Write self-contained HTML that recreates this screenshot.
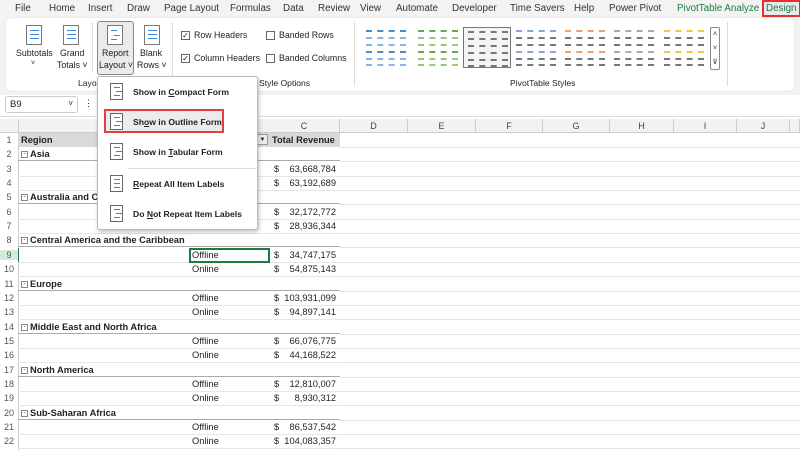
<!DOCTYPE html>
<html><head><meta charset="utf-8"><style>
*{margin:0;padding:0;box-sizing:border-box}
body{width:800px;height:450px;overflow:hidden;background:#fff;font-family:"Liberation Sans",sans-serif;font-size:9.3px;color:#222;position:relative}
.a{position:absolute;white-space:nowrap}
.menu span{position:absolute;top:3px;font-size:9.8px;color:#333}
.ib{position:absolute;width:16px;height:20px;border:1px solid #777;background:#fff}
.ib i{position:absolute;left:3px;height:1px;width:9px;background:#3a8ad8}
.cb{position:absolute;width:9px;height:9px;border:1px solid #666;background:#fff;font-size:8px;line-height:7px;text-align:center}
.rn{position:absolute;left:0;width:18px;text-align:center;color:#555;font-size:9px}
.sty{position:absolute;top:27px;width:48px;height:41px}
.sty b{position:absolute;left:4px;width:40px;height:0;border-top:2px dashed #777}
.mi{position:absolute;left:104px;font-size:8.6px;font-weight:bold;color:#222}
.mic{position:absolute;left:110px;width:13px;height:17px;border:1px solid #666;background:#fff}
.mic i{position:absolute;left:3px;height:1px;width:6px;background:#3a8ad8}
.rb{font-size:8.8px}
</style></head><body>
<div class="a" style="left:0;top:0;width:800px;height:95px;background:#f3f3f3"></div>
<div class="menu">
<span style="left:15px">File</span><span style="left:49px">Home</span><span style="left:88px">Insert</span><span style="left:127px">Draw</span><span style="left:164px">Page Layout</span><span style="left:230px">Formulas</span><span style="left:283px">Data</span><span style="left:318px">Review</span><span style="left:360px">View</span><span style="left:396px">Automate</span><span style="left:452px">Developer</span><span style="left:510px">Time Savers</span><span style="left:574px">Help</span><span style="left:609px">Power Pivot</span><span style="left:677px;color:#1e7a44">PivotTable Analyze</span>
<span style="left:762px;top:0;color:#1e7a44;border:2px solid #e03030;padding:1px 2px;background:#e8e8e8">Design</span>
</div>
<div class="a" style="left:6px;top:18px;width:788px;height:73px;background:#fff;border-radius:6px;box-shadow:0 0 1px #bbb"></div>
<div class="rb">
<div class="ib" style="left:26px;top:25px"><i style="top:4px"></i><i style="top:8px"></i><i style="top:12px"></i></div>
<div class="a" style="left:16px;top:48px">Subtotals</div><div class="a" style="left:31px;top:60px;font-size:7px">˅</div>
<div class="ib" style="left:63px;top:25px"><i style="top:4px"></i><i style="top:8px"></i><i style="top:12px"></i></div>
<div class="a" style="left:60px;top:48px">Grand</div><div class="a" style="left:57px;top:60px">Totals ˅</div>
<div class="a" style="left:92px;top:22px;width:1px;height:50px;background:#ddd"></div>
<div class="a" style="left:97px;top:21px;width:37px;height:54px;border:1px solid #888;border-radius:3px;background:#eaeaea"></div>
<div class="ib" style="left:107px;top:25px"><i style="top:4px;width:6px"></i><i style="top:9px;width:6px;left:6px"></i><i style="top:13px;width:6px"></i></div>
<div class="a" style="left:102px;top:48px">Report</div><div class="a" style="left:99px;top:60px">Layout ˅</div>
<div class="ib" style="left:144px;top:25px"><i style="top:4px"></i><i style="top:8px"></i><i style="top:12px"></i></div>
<div class="a" style="left:140px;top:48px">Blank</div><div class="a" style="left:137px;top:60px">Rows ˅</div>
<div class="a" style="left:78px;top:78px;font-size:8.6px">Layo</div>
<div class="a" style="left:172px;top:22px;width:1px;height:64px;background:#ddd"></div>
<div class="cb" style="left:181px;top:31px">✓</div><div class="a" style="left:194px;top:30px">Row Headers</div>
<div class="cb" style="left:181px;top:54px">✓</div><div class="a" style="left:194px;top:53px">Column Headers</div>
<div class="cb" style="left:266px;top:31px"></div><div class="a" style="left:279px;top:30px">Banded Rows</div>
<div class="cb" style="left:266px;top:54px"></div><div class="a" style="left:279px;top:53px">Banded Columns</div>
<div class="a" style="left:259px;top:78px;font-size:8.6px">Style Options</div>
</div>
<div class="a" style="left:354px;top:22px;width:1px;height:64px;background:#ddd"></div>
<div class="sty" style="left:362px"><b style="top:3px;border-color:#4a8ad0"></b><b style="top:10px;border-color:#8ab6e6"></b><b style="top:17px;border-color:#8ab6e6"></b><b style="top:24px;border-color:#4a8ad0"></b><b style="top:31px;border-color:#8ab6e6"></b><b style="top:37px;border-color:#8ab6e6"></b></div>
<div class="sty" style="left:414px"><b style="top:3px;border-color:#6aa84f"></b><b style="top:10px;border-color:#9cc77f"></b><b style="top:17px;border-color:#9cc77f"></b><b style="top:24px;border-color:#6aa84f"></b><b style="top:31px;border-color:#9cc77f"></b><b style="top:37px;border-color:#9cc77f"></b></div>
<div class="sty" style="left:463px;border:1px solid #777;background:#f4f4f4"><b style="top:3px"></b><b style="top:10px"></b><b style="top:17px"></b><b style="top:24px"></b><b style="top:31px"></b><b style="top:37px"></b></div>
<div class="sty" style="left:512px"><b style="top:3px;border-color:#8aa4d6"></b><b style="top:10px"></b><b style="top:17px"></b><b style="top:24px;border-color:#8aa4d6"></b><b style="top:31px"></b><b style="top:37px"></b></div>
<div class="sty" style="left:561px"><b style="top:3px;border-color:#f0a070"></b><b style="top:10px"></b><b style="top:17px"></b><b style="top:24px;border-color:#f0a070"></b><b style="top:31px"></b><b style="top:37px"></b></div>
<div class="sty" style="left:610px"><b style="top:3px;border-color:#aaa"></b><b style="top:10px"></b><b style="top:17px"></b><b style="top:24px;border-color:#aaa"></b><b style="top:31px"></b><b style="top:37px"></b></div>
<div class="sty" style="left:660px"><b style="top:3px;border-color:#f0c840"></b><b style="top:10px"></b><b style="top:17px"></b><b style="top:24px;border-color:#f0c840"></b><b style="top:31px"></b><b style="top:37px"></b></div>
<div class="a" style="left:710px;top:27px;width:10px;height:43px;border:1px solid #888;border-radius:2px;font-size:7px;text-align:center;line-height:14px">˄<br>˅<br>⊽</div>
<div class="a" style="left:510px;top:78px;font-size:8.6px">PivotTable Styles</div>
<div class="a" style="left:727px;top:22px;width:1px;height:64px;background:#ddd"></div>
<div class="a" style="left:5px;top:96px;width:73px;height:17px;border:1px solid #ccc;border-radius:3px;padding:2px 4px;font-size:9.5px">B9<span style="position:absolute;right:4px;top:2px;font-size:8px">˅</span></div>
<div class="a" style="left:84px;top:98px;font-size:9px">⋮</div>
<div class="a" style="left:0;top:116px;width:800px;height:1px;background:#ddd"></div>
<div class="a" style="left:0;top:119px;width:800px;height:14px;background:#f2f2f2;border-bottom:1px solid #ccc"></div>
<div class="a" style="left:18px;top:119px;width:1px;height:331px;background:#ccc"></div>
<div id="cols"></div>
<div id="g"></div>
<div class="a" style="left:97px;top:76px;width:161px;height:154px;background:#fff;border:1px solid #bbb;border-radius:3px;box-shadow:1px 2px 4px rgba(0,0,0,.25)"></div>
<div class="mic" style="top:83px"><i style="top:3px"></i><i style="top:7px;left:5px"></i><i style="top:11px"></i></div><div class="mi" style="top:87px;left:133px">Show in <u>C</u>ompact Form</div>
<div class="a" style="left:104px;top:109px;width:120px;height:24px;border:2px solid #e04040;background:#ececec"></div>
<div class="mic" style="top:113px"><i style="top:3px"></i><i style="top:7px;left:5px"></i><i style="top:11px"></i></div><div class="mi" style="top:117px;left:133px">Sh<u>o</u>w in Outline Form</div>
<div class="mic" style="top:143px"><i style="top:3px"></i><i style="top:7px;left:5px"></i><i style="top:11px"></i></div><div class="mi" style="top:147px;left:133px">Show in <u>T</u>abular Form</div>
<div class="a" style="left:128px;top:168px;width:128px;height:1px;background:#ddd"></div>
<div class="mic" style="top:175px"><i style="top:3px"></i><i style="top:7px"></i><i style="top:11px"></i></div><div class="mi" style="top:179px;left:133px"><u>R</u>epeat All Item Labels</div>
<div class="mic" style="top:205px"><i style="top:3px"></i><i style="top:7px;left:5px"></i><i style="top:11px"></i></div><div class="mi" style="top:209px;left:133px">Do <u>N</u>ot Repeat Item Labels</div>
<script>
var cols=[["",18,0],["C",269,340],["D",340,408],["E",408,476],["F",476,543],["G",543,610],["H",610,674],["I",674,737],["J",737,790],["",790,800]];
var h="";
cols.forEach(function(c){if(c[2])h+='<div class="a" style="left:'+c[1]+'px;top:119px;width:'+(c[2]-c[1])+'px;height:14px;border-right:1px solid #ccc;text-align:center;line-height:14px;color:#444;font-size:9px">'+c[0]+'</div>';});
document.getElementById("cols").innerHTML=h;
var rows=[["Region","","",""],["Asia","","",""],["","","$","63,668,784"],["","","$","63,192,689"],["Australia and Oceania","","",""],["","","$","32,172,772"],["","","$","28,936,344"],["Central America and the Caribbean","","",""],["","Offline","$","34,747,175"],["","Online","$","54,875,143"],["Europe","","",""],["","Offline","$","103,931,099"],["","Online","$","94,897,141"],["Middle East and North Africa","","",""],["","Offline","$","66,076,775"],["","Online","$","44,168,522"],["North America","","",""],["","Offline","$","12,810,007"],["","Online","$","8,930,312"],["Sub-Saharan Africa","","",""],["","Offline","$","86,537,542"],["","Online","$","104,083,357"]];
var g="";
rows.forEach(function(r,i){var t=133+i*14.35;
g+='<div class="rn" style="top:'+(t+2)+'px;'+(i==8?'color:#1e7a44;background:#d8e8dd;':'')+'">'+(i+1)+'</div>';
g+='<div class="a" style="left:340px;top:'+(t+14)+'px;width:460px;height:1px;background:#e3e3e3"></div>';
if(i==0){g+='<div class="a" style="left:18px;top:'+t+'px;width:322px;height:14px;background:#d9d9d9"></div><div class="a" style="left:21px;top:'+(t+2)+'px;font-weight:bold">Region</div><div class="a" style="left:257px;top:'+(t+1)+'px;width:11px;height:11px;border:1px solid #999;background:#eee;font-size:6px;text-align:center;line-height:10px">▼</div><div class="a" style="left:272px;top:'+(t+2)+'px;font-weight:bold">Total Revenue</div>';}
else if(r[0]){g+='<div class="a" style="left:21px;top:'+(t+4)+'px;width:7px;height:7px;border:1px solid #888;font-size:6px;line-height:4px;text-align:center">-</div><div class="a" style="left:30px;top:'+(t+2)+'px;font-weight:bold">'+r[0]+'</div><div class="a" style="left:18px;top:'+(t+13)+'px;width:322px;height:1px;background:#aaa"></div>';}
else{g+='<div class="a" style="left:18px;top:'+(t+14)+'px;width:322px;height:1px;background:#e6e6e6"></div>';
if(r[1])g+='<div class="a" style="left:192px;top:'+(t+2)+'px">'+r[1]+'</div>';
g+='<div class="a" style="left:274px;top:'+(t+2)+'px">$</div><div class="a" style="left:280px;width:56px;text-align:right;top:'+(t+2)+'px">'+r[3]+'</div>';}
});
g+='<div class="a" style="left:189px;top:'+(133+8*14.35)+'px;width:81px;height:15px;border:2px solid #1e7a44"></div>';
g+='<div class="a" style="left:18px;top:'+(133+8*14.35)+'px;width:1px;height:14px;background:#1e7a44"></div>';
document.getElementById("g").innerHTML=g;
</script>
</body></html>
